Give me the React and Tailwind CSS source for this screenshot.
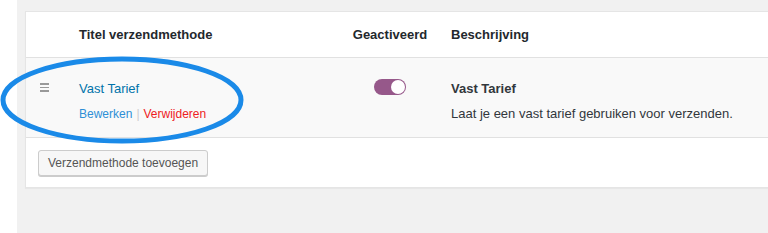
import React from "react";

const font = { fontFamily: '"Liberation Sans", Arial, sans-serif' };

export default function App() {
  return (
    <div className="relative flex w-[768px] h-[233px] overflow-hidden bg-white" style={font}>
      <div className="w-[17px] shrink-0 bg-white" />
      <div className="flex-1 bg-[#f1f1f1] pl-[8px] pt-[11px] overflow-hidden">
        <div className="w-[800px] bg-white border border-[#e5e5e5] shadow-[0_1px_1px_rgba(0,0,0,0.04)]">
          {/* header */}
          <div className="grid grid-cols-[53px_261px_100px_1fr] h-[46px] items-center border-b border-[#e1e1e1] text-[13px] font-semibold text-[#23282d]">
            <div />
            <div>Titel verzendmethode</div>
            <div className="text-center">Geactiveerd</div>
            <div className="pl-[11px]">Beschrijving</div>
          </div>
          {/* row */}
          <div className="grid grid-cols-[53px_261px_100px_1fr] h-[80px] items-center bg-[#f9f9f9] border-b border-[#e1e1e1] text-[13px]">
            <div className="flex justify-start pl-[14px] self-start pt-[25px]">
              <div className="flex flex-col gap-[2px]">
                <span className="block w-[9px] h-[1.5px] bg-[#999]" />
                <span className="block w-[9px] h-[1.5px] bg-[#999]" />
                <span className="block w-[9px] h-[1.5px] bg-[#999]" />
              </div>
            </div>
            <div className="flex flex-col gap-[6px] self-start pt-[21px]">
              <span className="text-[13px] text-[#0073aa]">Vast Tarief</span>
              <span className="text-[12px]">
                <span className="text-[#2e8fd6]">Bewerken</span>
                <span className="text-[#ccc] mx-[4px]">|</span>
                <span className="text-[#ee1c24]">Verwijderen</span>
              </span>
            </div>
            <div className="flex justify-center self-start pt-[21px]">
              <div className="flex items-center justify-end w-[32px] h-[16px] rounded-full bg-[#96588a] p-[1px]">
                <div className="w-[14px] h-[14px] rounded-full bg-white" />
              </div>
            </div>
            <div className="pl-[11px] flex flex-col gap-[5px] self-start pt-[21px] text-[#32373c]">
              <span className="font-semibold">Vast Tarief</span>
              <span>Laat je een vast tarief gebruiken voor verzenden.</span>
            </div>
          </div>
          {/* footer */}
          <div className="h-[49px] flex items-center pl-[12px]">
            <button className="h-[26px] px-[9px] text-[12px] text-[#555] bg-[#f7f7f7] border border-[#cccccc] rounded-[3px] shadow-[0_1px_0_#cccccc]">
              Verzendmethode toevoegen
            </button>
          </div>
        </div>
      </div>
      <svg className="absolute left-0 top-0 pointer-events-none" width="768" height="233">
        <ellipse cx="122" cy="100" rx="119" ry="41" fill="none" stroke="#1a8ae8" strokeWidth="5" />
      </svg>
    </div>
  );
}
